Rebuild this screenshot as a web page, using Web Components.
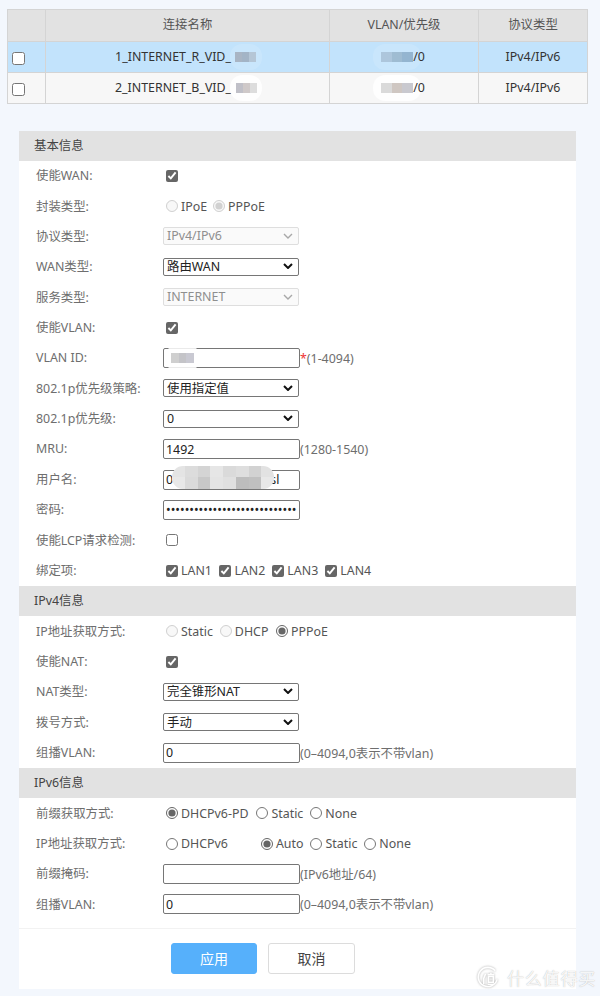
<!DOCTYPE html>
<html lang="zh">
<head>
<meta charset="utf-8">
<title>WAN</title>
<style>
  html, body { margin: 0; padding: 0; background: #f3f7fd; }
  body { font: 12.4px "Noto Sans", "Noto Sans CJK SC", sans-serif; color: #444; width: 600px; height: 996px; overflow: hidden; position: relative; }
  wan-panel { margin: 27px 24px 0 19px; }
</style>
</head>
<body>
<wan-table></wan-table>
<wan-panel>
  <form-section title="基本信息">
    <form-row label="使能WAN:"><ui-check checked></ui-check></form-row>
    <form-row label="封装类型:">
      <ui-radio text="IPoE" disabled></ui-radio>
      <ui-radio text="PPPoE" disabled checked style="margin-left:3px"></ui-radio>
    </form-row>
    <form-row label="协议类型:"><ui-select value="IPv4/IPv6" disabled></ui-select></form-row>
    <form-row label="WAN类型:"><ui-select value="路由WAN"></ui-select></form-row>
    <form-row label="服务类型:"><ui-select value="INTERNET" disabled></ui-select></form-row>
    <form-row label="使能VLAN:"><ui-check checked></ui-check></form-row>
    <form-row label="VLAN ID:"><ui-input hint="(1-4094)" required></ui-input>
      <blur-patch cols="3" style="left:146px;top:2px;width:35px;height:26px" shades="#cfcfcf,#c4c4c8,#c9c9d2"></blur-patch>
    </form-row>
    <form-row label="802.1p优先级策略:"><ui-select value="使用指定值"></ui-select></form-row>
    <form-row label="802.1p优先级:"><ui-select value="0"></ui-select></form-row>
    <form-row label="MRU:"><ui-input value="1492" hint="(1280-1540)"></ui-input></form-row>
    <form-row label="用户名:"><ui-input value="0                            asl"></ui-input>
      <blur-patch cols="8" fill="1" style="left:153px;top:1px;width:102px;height:23px" shades="#e4e4e4,#dcdcdc,#d4d4d4,#e6e6e6,#dadada,#dedede,#d2d2d2,#e2e2e2,#e8e8e8,#dadada,#c8c8c8,#e4e4e4,#e0e0e0,#bdbdbd,#c0c0c0,#e8e8e8"></blur-patch>
    </form-row>
    <form-row label="密码:"><ui-input type="password" value="abcdefghijklmnopqrstuvwxyzabcd"></ui-input></form-row>
    <form-row label="使能LCP请求检测:"><ui-check></ui-check></form-row>
    <form-row label="绑定项:">
      <ui-check checked text="LAN1"></ui-check>
      <ui-check checked text="LAN2" style="margin-left:4.5px"></ui-check>
      <ui-check checked text="LAN3" style="margin-left:4px"></ui-check>
      <ui-check checked text="LAN4" style="margin-left:4px"></ui-check>
    </form-row>
  </form-section>
  <form-section title="IPv4信息">
    <form-row label="IP地址获取方式:">
      <ui-radio text="Static" disabled></ui-radio>
      <ui-radio text="DHCP" disabled style="margin-left:4px"></ui-radio>
      <ui-radio text="PPPoE" checked style="margin-left:4.500px"></ui-radio>
    </form-row>
    <form-row label="使能NAT:"><ui-check checked></ui-check></form-row>
    <form-row label="NAT类型:"><ui-select value="完全锥形NAT"></ui-select></form-row>
    <form-row label="拨号方式:"><ui-select value="手动"></ui-select></form-row>
    <form-row label="组播VLAN:"><ui-input value="0" hint="(0–4094,0表示不带vlan)"></ui-input></form-row>
  </form-section>
  <form-section title="IPv6信息">
    <form-row label="前缀获取方式:">
      <ui-radio text="DHCPv6-PD" checked></ui-radio>
      <ui-radio text="Static" style="margin-left:5px"></ui-radio>
      <ui-radio text="None" style="margin-left:4px"></ui-radio>
    </form-row>
    <form-row label="IP地址获取方式:">
      <ui-radio text="DHCPv6"></ui-radio>
      <ui-radio text="Auto" checked style="margin-left:30px"></ui-radio>
      <ui-radio text="Static" style="margin-left:4px"></ui-radio>
      <ui-radio text="None" style="margin-left:4px"></ui-radio>
    </form-row>
    <form-row label="前缀掩码:"><ui-input hint="(IPv6地址/64)"></ui-input></form-row>
    <form-row label="组播VLAN:"><ui-input value="0" hint="(0–4094,0表示不带vlan)"></ui-input></form-row>
  </form-section>
  <form-actions></form-actions>
</wan-panel>
<wan-mark></wan-mark>

<script>
  class WanTable extends HTMLElement {
    constructor() {
      super();
      this.attachShadow({ mode: 'open' });
    }

    connectedCallback() {
      const rows = [
        { name: '1_INTERNET_R_VID_', cls: 'on', a: '#a9b5c4,#a3b4c6,#b5c6d6', b: '#adc6dc,#9fbcd2,#94b5d0', glow: 'rgba(255,255,255,.12)' },
        { name: '2_INTERNET_B_VID_', cls: '', a: '#c0c0c8,#cfc9c9,#dddddd', b: '#dadada,#cfc7c2,#c9c9cf', glow: 'rgba(255,255,255,.8)' },
      ];
      const body = rows.map((r) => `
        <tr class="${r.cls}">
          <td class="box"><input type="checkbox"></td>
          <td><span class="mask nm">${r.name}<blur-patch cols="3" style="right:-2px;top:-4px;width:32px;height:26px;background:${r.glow}" shades="${r.a}"></blur-patch></span></td>
          <td><span class="mask vl"><blur-patch cols="3" style="left:-10px;top:-4px;width:48px;height:26px;background:${r.glow}" shades="${r.b}"></blur-patch><em>/0</em></span></td>
          <td>IPv4/IPv6</td>
        </tr>`).join('');
      this.shadowRoot.innerHTML = `
        <style>
          :host { display: block; margin: 9px 12px 0 7px; }
          table { border-collapse: collapse; table-layout: fixed; width: 581px; height: 94px; border: 1px solid #d4d4d4; }
          th, td { border: 1px solid #d4d4d4; text-align: center; padding: 0 0 2px; font-weight: 400; color: #333; }
          th { background: #e2e2e2; color: #555; height: 28px; padding-bottom: 3px; }
          td { background: #f7f7f7; height: 28px; }
          .on td { background: #c2e3fc; }
          .box { text-align: left; padding: 0; }
          input { margin: 0 0 0 4px; width: 13px; height: 13px; vertical-align: middle; }
          .mask { position: relative; display: inline-block; }
          .nm { padding-right: 29px; }
          .vl { padding-left: 30px; }
          em { position: relative; font-style: normal; }
        </style>
        <table>
          <colgroup><col style="width:38px"><col style="width:284px"><col style="width:149px"><col></colgroup>
          <tr><th></th><th>连接名称</th><th>VLAN/优先级</th><th>协议类型</th></tr>
          ${body}
        </table>`;
    }
  }

  class WanPanel extends HTMLElement {
    constructor() {
      super();
      this.attachShadow({ mode: 'open' }).innerHTML = `
        <style>
          :host { display: block; background: #fff; width: 557px; }
        </style>
        <slot></slot>`;
    }
  }

  class FormSection extends HTMLElement {
    constructor() {
      super();
      this.attachShadow({ mode: 'open' });
    }

    connectedCallback() {
      this.shadowRoot.innerHTML = `
        <style>
          :host { display: block; }
          h3 { margin: 0; height: 30px; line-height: 30px; padding-left: 15px; background: #e2e2e2; font-size: inherit; font-weight: 400; color: #444; }
        </style>
        <h3>${this.getAttribute('title')}</h3>
        <slot></slot>`;
    }
  }

  class FormRow extends HTMLElement {
    constructor() {
      super();
      this.attachShadow({ mode: 'open' });
    }

    connectedCallback() {
      this.shadowRoot.innerHTML = `
        <style>
          :host { display: flex; align-items: center; height: 30.4px; box-sizing: border-box; padding-bottom: 1px; position: relative; }
          label { width: 127px; padding: 0 0 1px 17px; color: #6e6e6e; flex: none; }
          .ctl { display: flex; align-items: center; }
        </style>
        <label>${this.getAttribute('label')}</label>
        <div class="ctl"><slot></slot></div>`;
    }
  }

  class UiCheck extends HTMLElement {
    constructor() {
      super();
      this.attachShadow({ mode: 'open' });
    }

    connectedCallback() {
      const text = this.getAttribute('text');
      this.shadowRoot.innerHTML = `
        <style>
          :host { display: inline-flex; align-items: center; color: #555; }
          input { margin: 0 3px; width: 12px; height: 12px; accent-color: #666; }
          span:empty { display: none; }
        </style>
        <input type="checkbox" ${this.hasAttribute('checked') ? 'checked' : ''}>
        <span>${text || ''}</span>`;
    }
  }

  class UiRadio extends HTMLElement {
    constructor() {
      super();
      this.attachShadow({ mode: 'open' });
    }

    connectedCallback() {
      this.shadowRoot.innerHTML = `
        <style>
          :host { display: inline-flex; align-items: center; color: #555; }
          input { margin: 0 3px; width: 12px; height: 12px; accent-color: #666; }
        </style>
        <input type="radio" ${this.hasAttribute('checked') ? 'checked' : ''} ${this.hasAttribute('disabled') ? 'disabled' : ''}>
        <span>${this.getAttribute('text')}</span>`;
    }
  }

  class UiSelect extends HTMLElement {
    constructor() {
      super();
      this.attachShadow({ mode: 'open' });
    }

    connectedCallback() {
      const off = this.hasAttribute('disabled');
      this.shadowRoot.innerHTML = `
        <style>
          :host { display: flex; align-items: center; justify-content: space-between; width: 136px; height: 18px; box-sizing: border-box; padding: 0 5px 1px 3px; color: #222; background: #fff; border: 1px solid #767676; border-radius: 2px; white-space: nowrap; }
          :host([disabled]) { color: #8f8f8f; background: #fafafa; border-color: #dedede; }
          svg { display: block; flex: none; }
        </style>
        <span>${this.getAttribute('value')}</span>
        <svg width="10" height="6" viewBox="0 0 10 6" fill="none" stroke="${off ? '#a8a8a8' : '#111'}" stroke-width="${off ? 1.4 : 2}"><path d="M1 1l4 4 4-4"/></svg>`;
    }
  }

  class UiInput extends HTMLElement {
    constructor() {
      super();
      this.attachShadow({ mode: 'open' });
    }

    connectedCallback() {
      const req = this.hasAttribute('required') ? '<b>*</b>' : '';
      this.shadowRoot.innerHTML = `
        <style>
          :host { display: flex; align-items: center; color: #6e6e6e; white-space: nowrap; }
          input { display: block; width: 137px; height: 20px; box-sizing: border-box; padding: 0 2px; font: inherit; color: #222; background: #fff; border: 1px solid #767676; border-radius: 2px; outline: 0; }
          b { color: #e33; font-weight: 400; }
        </style>
        <input type="${this.getAttribute('type') || 'text'}">${req}<span>${this.getAttribute('hint') || ''}</span>`;
      this.shadowRoot.querySelector('input').value = this.getAttribute('value') || '';
    }
  }

  // mosaic smudge the screenshot has over private values
  class BlurPatch extends HTMLElement {
    constructor() {
      super();
      this.attachShadow({ mode: 'open' });
    }

    connectedCallback() {
      const cells = (this.getAttribute('shades') || '').split(',')
        .map((c) => `<i style="background:${c}"></i>`).join('');
      const full = this.hasAttribute('fill');
      this.shadowRoot.innerHTML = `
        <style>
          :host { position: absolute; display: flex; align-items: center; justify-content: center; background: rgba(255,255,255,.85); border-radius: 12px; }
          div { display: grid; grid-template-columns: repeat(${this.getAttribute('cols') || 3}, 1fr); grid-auto-rows: 1fr; width: ${full ? '100%' : '66%'}; height: ${full ? '100%' : '10px'}; border-radius: ${full ? '11px' : '0'}; overflow: hidden; filter: blur(.5px); }
        </style>
        <div>${cells}</div>`;
    }
  }

  class FormActions extends HTMLElement {
    constructor() {
      super();
      this.attachShadow({ mode: 'open' }).innerHTML = `
        <style>
          :host { display: flex; gap: 11px; margin-top: 8px; padding: 14px 0 15px 152px; border-top: 1px solid #f2f2f2; }
          button { width: 86px; height: 31px; font: inherit; font-size: 14px; border-radius: 3px; padding: 0; }
          .ok { background: #56b0fb; border: 1px solid #56b0fb; color: #fff; }
          .no { width: 87px; background: #fff; border: 1px solid #dcdcdc; color: #444; }
        </style>
        <button class="ok">应用</button>
        <button class="no">取消</button>`;
    }
  }

  class WanMark extends HTMLElement {
    constructor() {
      super();
      this.attachShadow({ mode: 'open' }).innerHTML = `
        <style>
          :host { position: absolute; right: 4px; bottom: 6px; display: flex; align-items: center; gap: 7px; color: rgba(255,255,255,.9); font-size: 17px; letter-spacing: .8px; text-shadow: 0 0 1px rgba(110,110,110,.55); }
          svg { display: block; }
        </style>
        <svg width="23" height="23" viewBox="0 0 24 24" fill="none" stroke="#fff" stroke-width="1.6" style="filter:drop-shadow(0 0 1px rgba(110,110,110,.6))">
          <path d="M19 5a10 10 0 1 0 2 9"/><path d="M9 8l-2 5v6M11 9h7M14.500 7v2M12 11h5v6h-5zM11 19h7"/>
        </svg>
        <span>什么值得买</span>`;
    }
  }

  customElements.define('wan-table', WanTable);
  customElements.define('wan-panel', WanPanel);
  customElements.define('form-section', FormSection);
  customElements.define('form-row', FormRow);
  customElements.define('ui-check', UiCheck);
  customElements.define('ui-radio', UiRadio);
  customElements.define('ui-select', UiSelect);
  customElements.define('ui-input', UiInput);
  customElements.define('blur-patch', BlurPatch);
  customElements.define('form-actions', FormActions);
  customElements.define('wan-mark', WanMark);
</script>
</body>
</html>
